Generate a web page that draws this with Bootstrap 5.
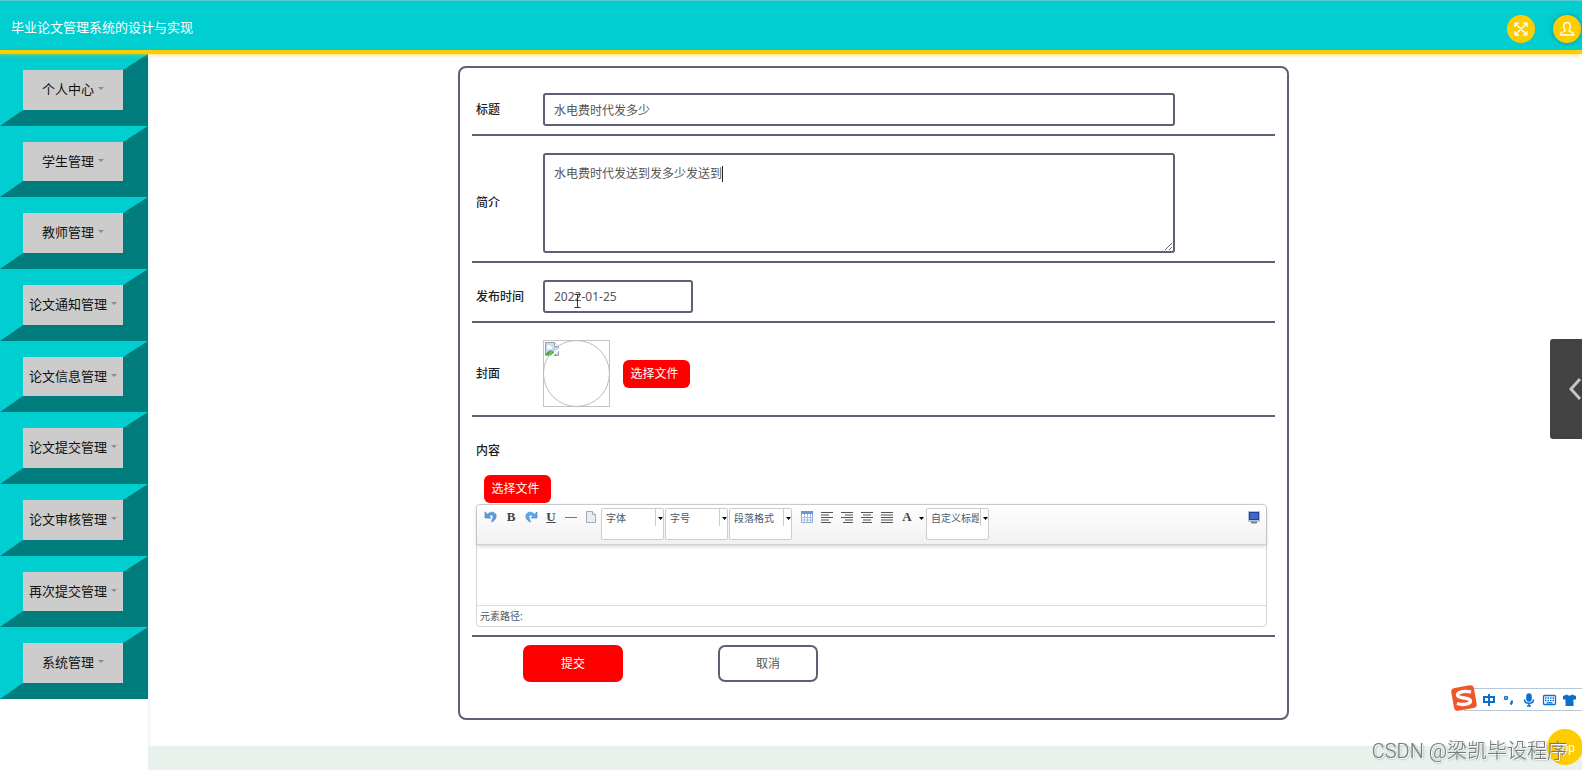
<!DOCTYPE html>
<html lang="zh-CN">
<head>
<meta charset="utf-8">
<meta name="viewport" content="width=device-width, initial-scale=1">
<title>毕业论文管理系统的设计与实现</title>
<link href="https://cdn.jsdelivr.net/npm/bootstrap@5.3.0/dist/css/bootstrap.min.css" rel="stylesheet">
<style>
:root { --cyan: #00ced1; --teal: #007c7d; --gold: #fc0; --ink: #5f6073; }
body { font-family: "Noto Sans", "Noto Sans CJK SC", sans-serif; font-size: 12px; line-height: 20px; color: #333; background: #fff; overflow-x: hidden; }
.topbar { background: var(--cyan); height: 54px; border-top: 1px solid #5cc9d2; border-bottom: 4px solid var(--gold); box-shadow: 0 1px 4px #ffcc0099; padding: 6px 1px 0 11px; z-index: 2; }
.site-title { font-size: 13px; color: #fff; text-decoration: none; padding-bottom: 4px; }
.header-actions { gap: 18px; }
.round-btn { width: 28px; height: 28px; background: var(--gold); border: 0; color: #fff; }
.round-btn.user { box-shadow: 0 0 5px #00606088; }
.sidebar { width: 148px; flex: none; box-shadow: 0 0 4px #cfe4f4; }
.menu { min-height: 645px; margin: 0; padding: 0; list-style: none; }
.menu button { width: 100%; font-size: 13px; color: #111; background: #ccc; border: solid; border-width: 16px 25px 16px 23px; border-color: var(--cyan) var(--teal) var(--teal) var(--cyan); padding: 0 0 2px; white-space: nowrap; }
.tri { display: inline-block; border: 3px solid transparent; border-top-color: #8c8c8c; border-bottom: 0; margin-left: 4px; vertical-align: 4px; }
.main-area { padding: 12px 293px 24px 310px; }
.form-box { border: 2px solid var(--ink); border-radius: 8px; padding: 8px 12px 36px; }
.line-row { border-bottom: 2px solid var(--ink); padding: 17px 8px 8px 4px; }
.field-name { width: 67px; flex: none; color: #222; font-weight: 500; }
.field { border: 2px solid var(--ink); border-radius: 3px; padding: 0 9px; height: 33px; color: #555; background: #fff; outline: 0; display: block; }
.field-wide { width: 632px; max-width: 100%; }
textarea.field { height: 100px; padding: 9px; resize: both; }
.field-date { width: 150px; font-size: 12px; }
.typing-caret { left: 179px; top: 13px; width: 1px; height: 16px; background: #222; }
.ibeam { left: 30px; top: 14px; }
.cover { width: 67px; height: 67px; border: 1px solid #c4c4c4; }
.cover::after { content: ""; position: absolute; inset: -1px; border: 1px solid #bbb; border-radius: 50%; }
.pick { width: 67px; height: 28px; background: red; color: #fff; border: 0; border-radius: 6px; padding: 0 4px 0 0; }
.cover + .pick { margin-left: 13px; }
.content-name { line-height: 34px; }
.content-name + .pick { margin: 7px 0 1px 8px; }
.editor { border: 1px solid #d4d4d4; border-radius: 4px; height: 123px; }
.tools { height: 40px; background: linear-gradient(#fff, #f2f0f3); border-bottom: 1px solid #d0d0d0; box-shadow: 0 1px 4px #0003; padding: 3px 2px 0 4px; border-radius: 4px 4px 0 0; }
.tool { width: 20px; height: 18px; border: 0; padding: 0; background: none; color: #444; font: 700 13px/18px "Liberation Serif", serif; }
.tool svg { display: block; margin: 1px auto; }
.tool-arrow { width: 9px; }
.combo { appearance: none; width: 63px; height: 32px; margin-right: 1px; padding: 0 9px 12px 4px; border: 1px solid #ccc; border-radius: 2px; font-size: 10px; line-height: 18px; color: #4a5a68; background: url("data:image/svg+xml,%3Csvg xmlns='http://www.w3.org/2000/svg' width='5' height='3'%3E%3Cpath d='M0 0h5L2.5 3z'/%3E%3C/svg%3E") no-repeat right 0 top 8px, linear-gradient(#ccc, #ccc) no-repeat right 7px top 0 / 1px 17px #fff; }
.path-bar { border-top: 1px solid #ddd; height: 21px; font-size: 10px; color: #4a5a68; padding-left: 3px; }
.act { width: 100px; height: 37px; border-radius: 7px; font-size: 12px; padding: 0; }
.act-ok { background: red; color: #fff; border: 0; margin-left: 51px; }
.act-no { background: #fff; color: #555; border: 2px solid var(--ink); margin-left: 95px; }
.foot { height: 24px; background: #e8f1ec; }
.side-tab { right: 0; top: 339px; width: 32px; height: 100px; background: #424242; border: 0; padding: 0; border-radius: 3px 0 0 3px; }
.ime { right: 0; bottom: 59px; width: 118px; height: 23px; background: #fff; border: solid #b5c8dc; border-width: 1px 0; padding-left: 15px; color: #0b6fce; }
.ime svg { width: 20px; height: 20px; flex: none; }
.ime .ime-logo { width: 28px; height: 28px; left: -14px; top: -5px; }
.to-top { right: -1px; bottom: 5px; width: 36px; height: 36px; background: var(--gold); color: #fff; text-decoration: none; font: 12px/38px Roboto, sans-serif; }
.credit { right: 15px; bottom: 4px; font: 300 20px/30px Roboto, "Noto Sans CJK SC", sans-serif; color: #76797b; text-shadow: 1px 1px 0 #fff, 1px 1px 2px #777; pointer-events: none; white-space: nowrap; }
</style>
</head>
<body>
<div class="min-vh-100 d-flex flex-column">
  <header class="topbar d-flex align-items-center justify-content-between position-relative">
    <a class="site-title" href="#">毕业论文管理系统的设计与实现</a>
    <div class="header-actions d-flex">
      <button class="round-btn rounded-circle p-0 d-flex align-items-center justify-content-center" type="button" aria-label="全屏">
        <svg width="16" height="16" viewBox="0 0 16 16" fill="none" stroke="currentColor" stroke-width="1.3"><path d="M2 2l12 12M14 2L2 14M2 6V2h4M10 2h4v4M14 10v4h-4M6 14H2v-4"/></svg>
      </button>
      <button class="round-btn user rounded-circle p-0 d-flex align-items-center justify-content-center" type="button" aria-label="用户">
        <svg width="16" height="16" viewBox="0 0 16 16" fill="none" stroke="currentColor" stroke-width="1.3"><path d="M6 9C4.800 7.500 4.500 6 4.700 4.500 4.900 2.500 6.200 1.500 8 1.500s3.100 1 3.300 3C11.500 6 11.200 7.500 10 9v1l3.500 1.500c1 .5 1.300 1.300 1.300 2.500H1.200c0-1.200.3-2 1.300-2.500L6 10z"/></svg>
      </button>
    </div>
  </header>

  <div class="d-flex flex-grow-1">
    <nav class="sidebar" aria-label="主菜单">
      <ul class="menu d-flex flex-column">
        <li class="d-flex flex-fill"><button type="button">个人中心<i class="tri"></i></button></li>
        <li class="d-flex flex-fill"><button type="button">学生管理<i class="tri"></i></button></li>
        <li class="d-flex flex-fill"><button type="button">教师管理<i class="tri"></i></button></li>
        <li class="d-flex flex-fill"><button type="button">论文通知管理<i class="tri"></i></button></li>
        <li class="d-flex flex-fill"><button type="button">论文信息管理<i class="tri"></i></button></li>
        <li class="d-flex flex-fill"><button type="button">论文提交管理<i class="tri"></i></button></li>
        <li class="d-flex flex-fill"><button type="button">论文审核管理<i class="tri"></i></button></li>
        <li class="d-flex flex-fill"><button type="button">再次提交管理<i class="tri"></i></button></li>
        <li class="d-flex flex-fill"><button type="button">系统管理<i class="tri"></i></button></li>
      </ul>
    </nav>

    <div class="flex-grow-1 d-flex flex-column">
      <main class="main-area flex-grow-1">
        <form class="form-box">
          <div class="line-row d-flex align-items-center">
            <label class="field-name" for="title">标题</label>
            <input class="field field-wide" id="title" type="text" value="水电费时代发多少">
          </div>
          <div class="line-row d-flex align-items-center">
            <label class="field-name" for="intro">简介</label>
            <div class="position-relative field-wide">
              <textarea class="field field-wide" id="intro">水电费时代发送到发多少发送到</textarea>
              <span class="typing-caret position-absolute"></span>
            </div>
          </div>
          <div class="line-row d-flex align-items-center">
            <label class="field-name" for="date">发布时间</label>
            <div class="position-relative">
              <input class="field field-date" id="date" type="text" value="2022-01-25">
              <svg class="ibeam position-absolute" width="9" height="14" viewBox="0 0 9 14" fill="none" stroke="#333"><path d="M1.500 .5h6M1.500 13.500h6M4.500 1v12"/></svg>
            </div>
          </div>
          <div class="line-row d-flex align-items-center">
            <span class="field-name">封面</span>
            <div class="cover position-relative">
              <svg class="d-block m-0" width="16" height="16" viewBox="0 0 16 16"><path d="M1.500 1.500h9l4 4v9h-13z" fill="#c9dcf5" stroke="#9aa0a8"/><path d="M10.500 1.500v4h4" fill="#fff" stroke="#9aa0a8"/><path d="M3 6.500a2 2 0 0 1 4-1 1.500 1.500 0 0 1 1 2.500H3z" fill="#fff"/><path d="M2 14c0-3 3-4.500 5-4.500S11 11 12 14z" fill="#4fa83d"/><path d="M7 15.500l9-8" stroke="#fff" stroke-width="2"/></svg>
            </div>
            <button class="pick" type="button">选择文件</button>
          </div>
          <div class="line-row">
            <div class="field-name content-name">内容</div>
            <button class="pick d-block" type="button">选择文件</button>
            <div class="editor d-flex flex-column">
              <div class="tools d-flex align-items-start">
                <button class="tool" type="button" aria-label="撤销"><svg width="14" height="14" viewBox="0 0 14 14"><path d="M1 2v6h6L5.200 6.200C7.500 4 9.500 5 9 7.500L7.500 12C12 10 13 6.500 11.500 4 9.500 1.500 6 1.500 3.500 4.300z" fill="#5a9fe0" stroke="#3b7fc4" stroke-width=".6"/></svg></button>
                <button class="tool" type="button" aria-label="加粗">B</button>
                <button class="tool" type="button" aria-label="重做"><svg width="14" height="14" viewBox="0 0 14 14"><path d="M13 2v6H7l1.800-1.800C6.500 4 4.500 5 5 7.500L6.500 12C2 10 1 6.500 2.500 4 4.500 1.500 8 1.500 10.500 4.300z" fill="#5aaae8" stroke="#3b7fc4" stroke-width=".6"/></svg></button>
                <button class="tool text-decoration-underline" type="button" aria-label="下划线">U</button>
                <button class="tool" type="button" aria-label="分隔线"><svg width="14" height="14"><path d="M1 7.500h12" stroke="#777"/></svg></button>
                <button class="tool" type="button" aria-label="清空"><svg width="14" height="14" viewBox="0 0 14 14"><path d="M2.500 1.500h6l3 3v8h-9z" fill="#e9edf5" stroke="#a3a9b5"/><path d="M8.500 1.500v3h3" fill="#fff" stroke="#a3a9b5"/></svg></button>
                <select class="combo" aria-label="字体"><option>字体</option></select>
                <select class="combo" aria-label="字号"><option>字号</option></select>
                <select class="combo" aria-label="段落格式"><option>段落格式</option></select>
                <button class="tool ms-1" type="button" aria-label="表格"><svg width="14" height="14"><path d="M1.500 1.500h11v11h-11z" fill="#fff" stroke="#8da9d6"/><path d="M1 1h12v3H1z" fill="#6d94dc"/><path d="M1 7.500h12M1 10h12M4.500 4v9M7.500 4v9M10.500 4v9" stroke="#a9bede"/></svg></button>
                <button class="tool" type="button" aria-label="左对齐"><svg width="14" height="14" stroke="#555"><path d="M1 2.500h12M1 5h8M1 7.500h12M1 10h8M1 12.500h10"/></svg></button>
                <button class="tool" type="button" aria-label="右对齐"><svg width="14" height="14" stroke="#555"><path d="M1 2.500h12M5 5h8M1 7.500h12M5 10h8M3 12.500h10"/></svg></button>
                <button class="tool" type="button" aria-label="居中"><svg width="14" height="14" stroke="#555"><path d="M1 2.500h12M3 5h8M1 7.500h12M3 10h8M2 12.500h10"/></svg></button>
                <button class="tool" type="button" aria-label="两端对齐"><svg width="14" height="14" stroke="#555"><path d="M1 2.500h12M1 5h12M1 7.500h12M1 10h12M1 12.500h12"/></svg></button>
                <button class="tool" type="button" aria-label="文字颜色">A</button>
                <button class="tool tool-arrow" type="button" aria-label="选择颜色"><svg width="5" height="14"><path d="M0 7h5L2.500 10z"/></svg></button>
                <select class="combo" aria-label="自定义标题"><option>自定义标题</option></select>
                <button class="tool ms-auto" type="button" aria-label="全屏编辑"><svg width="14" height="14"><rect x="1" y="1" width="12" height="11" rx="1" fill="#b4c0cc"/><rect x="2.500" y="2.500" width="9" height="7" fill="#4065cf" stroke="#25448f"/><path d="M4 12.500h6" stroke="#78818c" stroke-width="2"/></svg></button>
              </div>
              <div class="flex-grow-1" contenteditable="true" role="textbox" aria-label="内容"></div>
              <div class="path-bar">元素路径:</div>
            </div>
          </div>
          <div class="d-flex pt-2">
            <button class="act act-ok" type="button">提交</button>
            <button class="act act-no" type="button">取消</button>
          </div>
        </form>
      </main>
      <footer class="foot"></footer>
    </div>
  </div>
</div>

<button class="side-tab position-fixed" type="button" aria-label="展开"><svg class="d-block ms-auto" width="14" height="22" viewBox="0 0 14 22" fill="none" stroke="#c4c4c4" stroke-width="3"><path d="M12 1L3 11l9 10"/></svg></button>

<div class="ime position-fixed d-flex align-items-center">
  <svg class="ime-logo position-absolute" viewBox="0 0 28 28"><rect x="2.500" y="2.500" width="23" height="23" rx="4" fill="#f0562a" transform="rotate(-10 14 14)"/><path d="M21 8C14 6.500 7.500 8 7.500 11c0 4 13 2 13 6 0 3-7 4.500-13.500 2.500" fill="none" stroke="#fff" stroke-width="3.400"/></svg>
  <svg viewBox="0 0 20 20" fill="none" stroke="currentColor" stroke-width="2"><path d="M5 7h10v5H5zM10 4v12"/></svg>
  <svg viewBox="0 0 20 20" fill="none" stroke="currentColor"><circle cx="7" cy="8" r="1.500" stroke-width="1.500"/><path d="M12.500 10.500q1 2-1 4" stroke-width="2.200"/></svg>
  <svg viewBox="0 0 20 20" fill="none" stroke="currentColor" stroke-width="1.500"><rect x="8" y="4" width="4" height="7" rx="2" fill="currentColor"/><path d="M5.500 9.500c0 5 9 5 9 0M10 13.500V16M8 16h4"/></svg>
  <svg viewBox="0 0 20 20" fill="none" stroke="currentColor" stroke-width="1.300"><rect x="4.500" y="5.500" width="12" height="9" rx="1"/><path d="M6 8h9M6 10.500h9" stroke-dasharray="1.500 1"/><path d="M7.500 12.800h6"/></svg>
  <svg viewBox="0 0 20 20" fill="currentColor"><path d="M8 4.500c1 1.500 4 1.500 5 0l4 1.500v3.500h-2.500V16h-8V9.500H4V6z"/></svg>
</div>
<a class="to-top position-fixed rounded-circle text-center" href="#">Top</a>
<div class="credit position-fixed">CSDN @梁凯毕设程序</div>
<script src="https://cdn.jsdelivr.net/npm/bootstrap@5.3.0/dist/js/bootstrap.bundle.min.js"></script>
</body>
</html>
